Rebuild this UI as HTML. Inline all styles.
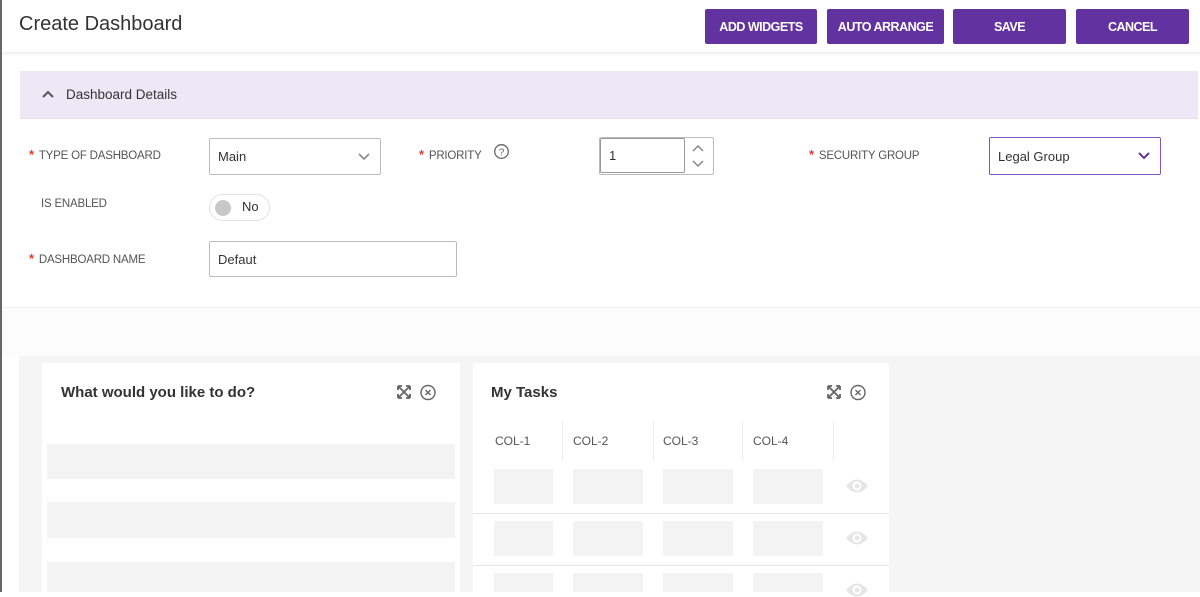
<!DOCTYPE html>
<html><head><style>
*{box-sizing:border-box;margin:0;padding:0}
body{width:1200px;height:592px;overflow:hidden;background:#fff;font-family:"Liberation Sans",sans-serif;position:relative;color:#333}
.a{position:absolute}
.btn{position:absolute;top:9px;height:35px;background:#6232a0;color:#fff;font-size:12.5px;font-weight:bold;display:flex;align-items:center;justify-content:center;border-radius:2px;letter-spacing:-0.5px}
.lbl{position:absolute;font-size:11.5px;color:#555;letter-spacing:-0.2px}
.lbl b{color:#e53935;margin-right:5px;font-size:13px}
.inp{position:absolute;border:1px solid #bbb;border-radius:2px;background:#fff;font-size:13px;color:#333;padding-left:8px;display:flex;align-items:center}
.g{position:absolute;background:#f3f3f3}
</style></head><body>
<div class="a" style="left:0;top:0;width:2px;height:592px;background:#666"></div>
<div class="a" style="left:2px;top:52px;width:1198px;height:4px;background:linear-gradient(#eee,#fff)"></div>
<div class="a" style="left:19px;top:13px;font-size:20px;color:#333">Create Dashboard</div>
<div class="btn" style="left:705px;width:112px">ADD WIDGETS</div>
<div class="btn" style="left:827px;width:117px">AUTO ARRANGE</div>
<div class="btn" style="left:953px;width:113px">SAVE</div>
<div class="btn" style="left:1076px;width:113px">CANCEL</div>
<div class="a" style="left:20px;top:71px;width:1178px;height:48px;background:#ede8f5;border-bottom:1px solid #e4e0ea"></div>
<svg class="a" style="left:41px;top:89px" width="14" height="10"><path d="M2 8 L7 3 L12 8" stroke="#555" stroke-width="2" fill="none"/></svg>
<div class="a" style="left:66px;top:87px;font-size:13.5px;color:#333">Dashboard Details</div>
<div class="lbl" style="left:29px;top:147px"><b>*</b>TYPE OF DASHBOARD</div>
<div class="inp" style="left:209px;top:138px;width:172px;height:37px">Main</div>
<svg class="a" style="left:357px;top:151px" width="14" height="10"><path d="M2 3 L7 8 L12 3" stroke="#888" stroke-width="1.6" fill="none"/></svg>
<div class="lbl" style="left:419px;top:147px"><b>*</b>PRIORITY</div>
<svg class="a" style="left:493px;top:143px" width="17" height="17"><circle cx="8.5" cy="8.5" r="6.8" stroke="#666" stroke-width="1.3" fill="none"/><text x="8.5" y="12.5" font-size="10" text-anchor="middle" fill="#666" font-family="Liberation Sans">?</text></svg>
<div class="inp" style="left:599px;top:137px;width:115px;height:38px;padding:0"></div>
<div class="inp" style="left:600px;top:138px;width:85px;height:35px;border-color:#999">1</div>
<svg class="a" style="left:690px;top:142px" width="16" height="28"><path d="M3 9 L8 4 L13 9 M3 19 L8 24 L13 19" stroke="#888" stroke-width="1.5" fill="none"/></svg>
<div class="lbl" style="left:809px;top:147px"><b>*</b>SECURITY GROUP</div>
<div class="inp" style="left:989px;top:137px;width:172px;height:38px;border-color:#7e57c2">Legal Group</div>
<svg class="a" style="left:1137px;top:151px" width="14" height="10"><path d="M2 2 L7 7 L12 2" stroke="#6232a0" stroke-width="2" fill="none"/></svg>
<div class="lbl" style="left:41px;top:198px">IS ENABLED</div>
<div class="a" style="left:209px;top:194px;width:61px;height:27px;border:1px solid #e3e3e3;border-radius:14px;background:#fff"></div>
<div class="a" style="left:215px;top:200px;width:16px;height:16px;border-radius:50%;background:#c8c8c8"></div>
<div class="a" style="left:242px;top:199px;font-size:13px">No</div>
<div class="lbl" style="left:29px;top:251px"><b>*</b>DASHBOARD NAME</div>
<div class="inp" style="left:209px;top:241px;width:248px;height:36px">Defaut</div>
<div class="a" style="left:2px;top:307px;width:1198px;height:50px;background:#fcfcfc;border-top:1px solid #f0f0f0"></div>
<div class="a" style="left:19px;top:356px;width:1181px;height:236px;background:#f5f5f5"></div>
<div class="a" style="left:42px;top:363px;width:418px;height:229px;background:#fff"></div>
<div class="a" style="left:61px;top:384px;font-size:15px;font-weight:bold;color:#333">What would you like to do?</div>
<div class="g" style="left:47px;top:444px;width:408px;height:35px"></div>
<div class="g" style="left:47px;top:502px;width:408px;height:36px"></div>
<div class="g" style="left:47px;top:562px;width:408px;height:30px"></div>
<div class="a" style="left:473px;top:363px;width:416px;height:229px;background:#fff"></div>
<div class="a" style="left:491px;top:384px;font-size:15px;font-weight:bold;color:#333">My Tasks</div>
<svg class="a" style="left:396px;top:384px" width="66" height="18"><g stroke="#666" stroke-width="1.8" fill="none"><path d="M2 2 L14 14 M14 2 L2 14 M2 2 h4 M2 2 v4 M14 2 h-4 M14 2 v4 M2 14 h4 M2 14 v-4 M14 14 h-4 M14 14 v-4"/><circle cx="32" cy="8.5" r="7" stroke-width="1.4"/><path d="M29.5 6 L34.5 11 M34.5 6 L29.5 11" stroke-width="1.4"/></g></svg>
<svg class="a" style="left:826px;top:384px" width="66" height="18"><g stroke="#666" stroke-width="1.8" fill="none"><path d="M2 2 L14 14 M14 2 L2 14 M2 2 h4 M2 2 v4 M14 2 h-4 M14 2 v4 M2 14 h4 M2 14 v-4 M14 14 h-4 M14 14 v-4"/><circle cx="32" cy="8.5" r="7" stroke-width="1.4"/><path d="M29.5 6 L34.5 11 M34.5 6 L29.5 11" stroke-width="1.4"/></g></svg>
<div class="a" style="left:495px;top:434px;font-size:12px;color:#555">COL-1</div>
<div class="a" style="left:573px;top:434px;font-size:12px;color:#555">COL-2</div>
<div class="a" style="left:663px;top:434px;font-size:12px;color:#555">COL-3</div>
<div class="a" style="left:753px;top:434px;font-size:12px;color:#555">COL-4</div>
<div class="a" style="left:562px;top:421px;width:1px;height:39px;background:#eee"></div>
<div class="a" style="left:653px;top:421px;width:1px;height:39px;background:#eee"></div>
<div class="a" style="left:742px;top:421px;width:1px;height:39px;background:#eee"></div>
<div class="a" style="left:833px;top:421px;width:1px;height:39px;background:#eee"></div>
<div class="a" style="left:473px;top:513px;width:416px;height:1px;background:#e6e6e6"></div>
<div class="a" style="left:473px;top:565px;width:416px;height:1px;background:#e6e6e6"></div>
<div class="g" style="left:494px;top:469px;width:59px;height:35px"></div><div class="g" style="left:573px;top:469px;width:70px;height:35px"></div><div class="g" style="left:663px;top:469px;width:70px;height:35px"></div><div class="g" style="left:753px;top:469px;width:70px;height:35px"></div>
<div class="g" style="left:494px;top:521px;width:59px;height:35px"></div><div class="g" style="left:573px;top:521px;width:70px;height:35px"></div><div class="g" style="left:663px;top:521px;width:70px;height:35px"></div><div class="g" style="left:753px;top:521px;width:70px;height:35px"></div>
<div class="g" style="left:494px;top:573px;width:59px;height:19px"></div><div class="g" style="left:573px;top:573px;width:70px;height:19px"></div><div class="g" style="left:663px;top:573px;width:70px;height:19px"></div><div class="g" style="left:753px;top:573px;width:70px;height:19px"></div>
<svg class="a" style="left:845px;top:477px" width="24" height="120"><g fill="#e6e6e6"><path d="M1 9 Q12 -4 23 9 Q12 22 1 9Z"/><path d="M1 61 Q12 48 23 61 Q12 74 1 61Z"/><path d="M1 113 Q12 100 23 113 Q12 126 1 113Z"/></g><g fill="#fff"><circle cx="12" cy="9" r="4.5"/><circle cx="12" cy="61" r="4.5"/><circle cx="12" cy="113" r="4.5"/></g><g fill="#e6e6e6"><circle cx="12" cy="9" r="2.5"/><circle cx="12" cy="61" r="2.5"/><circle cx="12" cy="113" r="2.5"/></g></svg>
</body></html>
